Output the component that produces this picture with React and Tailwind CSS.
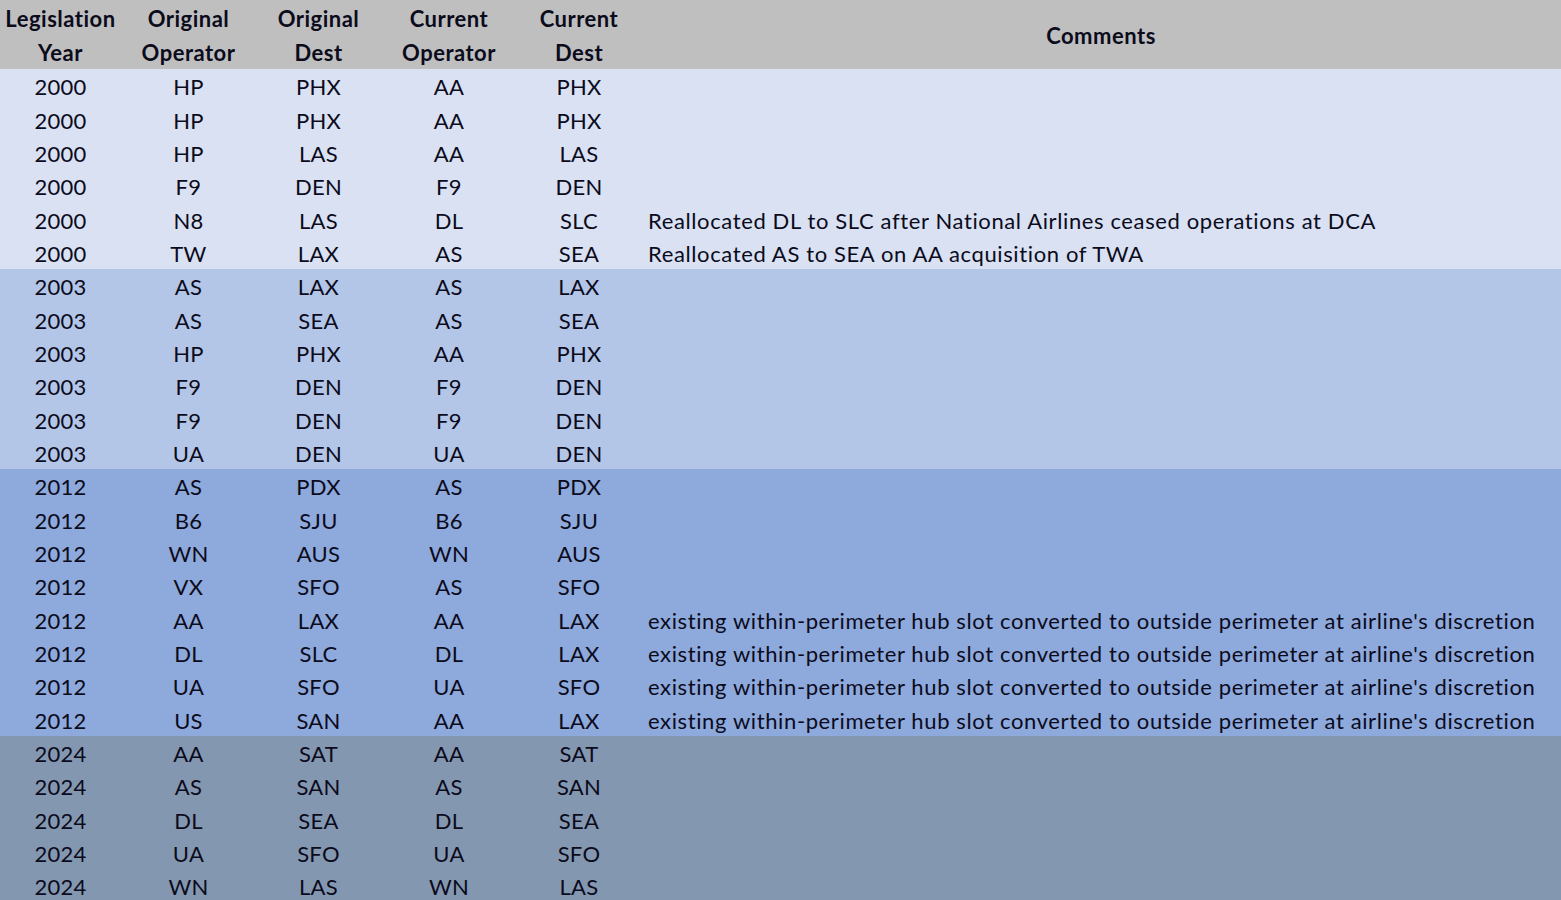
const groups = [
  {
    bg: "bg-[#d9e1f2]",
    rows: [
      ["2000", "HP", "PHX", "AA", "PHX", ""],
      ["2000", "HP", "PHX", "AA", "PHX", ""],
      ["2000", "HP", "LAS", "AA", "LAS", ""],
      ["2000", "F9", "DEN", "F9", "DEN", ""],
      ["2000", "N8", "LAS", "DL", "SLC", "Reallocated DL to SLC after National Airlines ceased operations at DCA"],
      ["2000", "TW", "LAX", "AS", "SEA", "Reallocated AS to SEA on AA acquisition of TWA"],
    ],
  },
  {
    bg: "bg-[#b4c6e7]",
    rows: [
      ["2003", "AS", "LAX", "AS", "LAX", ""],
      ["2003", "AS", "SEA", "AS", "SEA", ""],
      ["2003", "HP", "PHX", "AA", "PHX", ""],
      ["2003", "F9", "DEN", "F9", "DEN", ""],
      ["2003", "F9", "DEN", "F9", "DEN", ""],
      ["2003", "UA", "DEN", "UA", "DEN", ""],
    ],
  },
  {
    bg: "bg-[#8ea9db]",
    rows: [
      ["2012", "AS", "PDX", "AS", "PDX", ""],
      ["2012", "B6", "SJU", "B6", "SJU", ""],
      ["2012", "WN", "AUS", "WN", "AUS", ""],
      ["2012", "VX", "SFO", "AS", "SFO", ""],
      ["2012", "AA", "LAX", "AA", "LAX", "existing within-perimeter hub slot converted to outside perimeter at airline's discretion"],
      ["2012", "DL", "SLC", "DL", "LAX", "existing within-perimeter hub slot converted to outside perimeter at airline's discretion"],
      ["2012", "UA", "SFO", "UA", "SFO", "existing within-perimeter hub slot converted to outside perimeter at airline's discretion"],
      ["2012", "US", "SAN", "AA", "LAX", "existing within-perimeter hub slot converted to outside perimeter at airline's discretion"],
    ],
  },
  {
    bg: "bg-[#8497b0]",
    rows: [
      ["2024", "AA", "SAT", "AA", "SAT", ""],
      ["2024", "AS", "SAN", "AS", "SAN", ""],
      ["2024", "DL", "SEA", "DL", "SEA", ""],
      ["2024", "UA", "SFO", "UA", "SFO", ""],
      ["2024", "WN", "LAS", "WN", "LAS", ""],
    ],
  },
];

const widths = ["w-[121px]", "w-[135px]", "w-[125px]", "w-[136px]", "w-[124px]"];

export default function App() {
  return (
    <div
      className="w-[1561px] h-[900px] overflow-hidden bg-white text-[#0b0b1c] text-[22px]"
      style={{ fontFamily: "Lato, 'Open Sans', sans-serif" }}
    >
      <div className="flex h-[69px] bg-[#bfbfbf] font-bold leading-[34px] tracking-[0.5px] pt-[2px]">
        <div className={`${widths[0]} flex flex-col items-center justify-center`}>
          <span>Legislation</span>
          <span>Year</span>
        </div>
        <div className={`${widths[1]} flex flex-col items-center justify-center`}>
          <span>Original</span>
          <span>Operator</span>
        </div>
        <div className={`${widths[2]} flex flex-col items-center justify-center`}>
          <span>Original</span>
          <span>Dest</span>
        </div>
        <div className={`${widths[3]} flex flex-col items-center justify-center`}>
          <span>Current</span>
          <span>Operator</span>
        </div>
        <div className={`${widths[4]} flex flex-col items-center justify-center`}>
          <span>Current</span>
          <span>Dest</span>
        </div>
        <div className="flex-1 flex items-center justify-center">Comments</div>
      </div>
      {groups.map((g, gi) => (
        <div key={gi} className={g.bg}>
          {g.rows.map((r, ri) => (
            <div key={ri} className="flex h-[33.35px] items-center pt-[2px]">
              {r.slice(0, 5).map((c, ci) => (
                <div key={ci} className={`${widths[ci]} text-center tracking-[0.3px]`}>
                  {c}
                </div>
              ))}
              <div className="flex-1 pl-[7px] whitespace-nowrap tracking-[0.62px]">{r[5]}</div>
            </div>
          ))}
        </div>
      ))}
    </div>
  );
}
